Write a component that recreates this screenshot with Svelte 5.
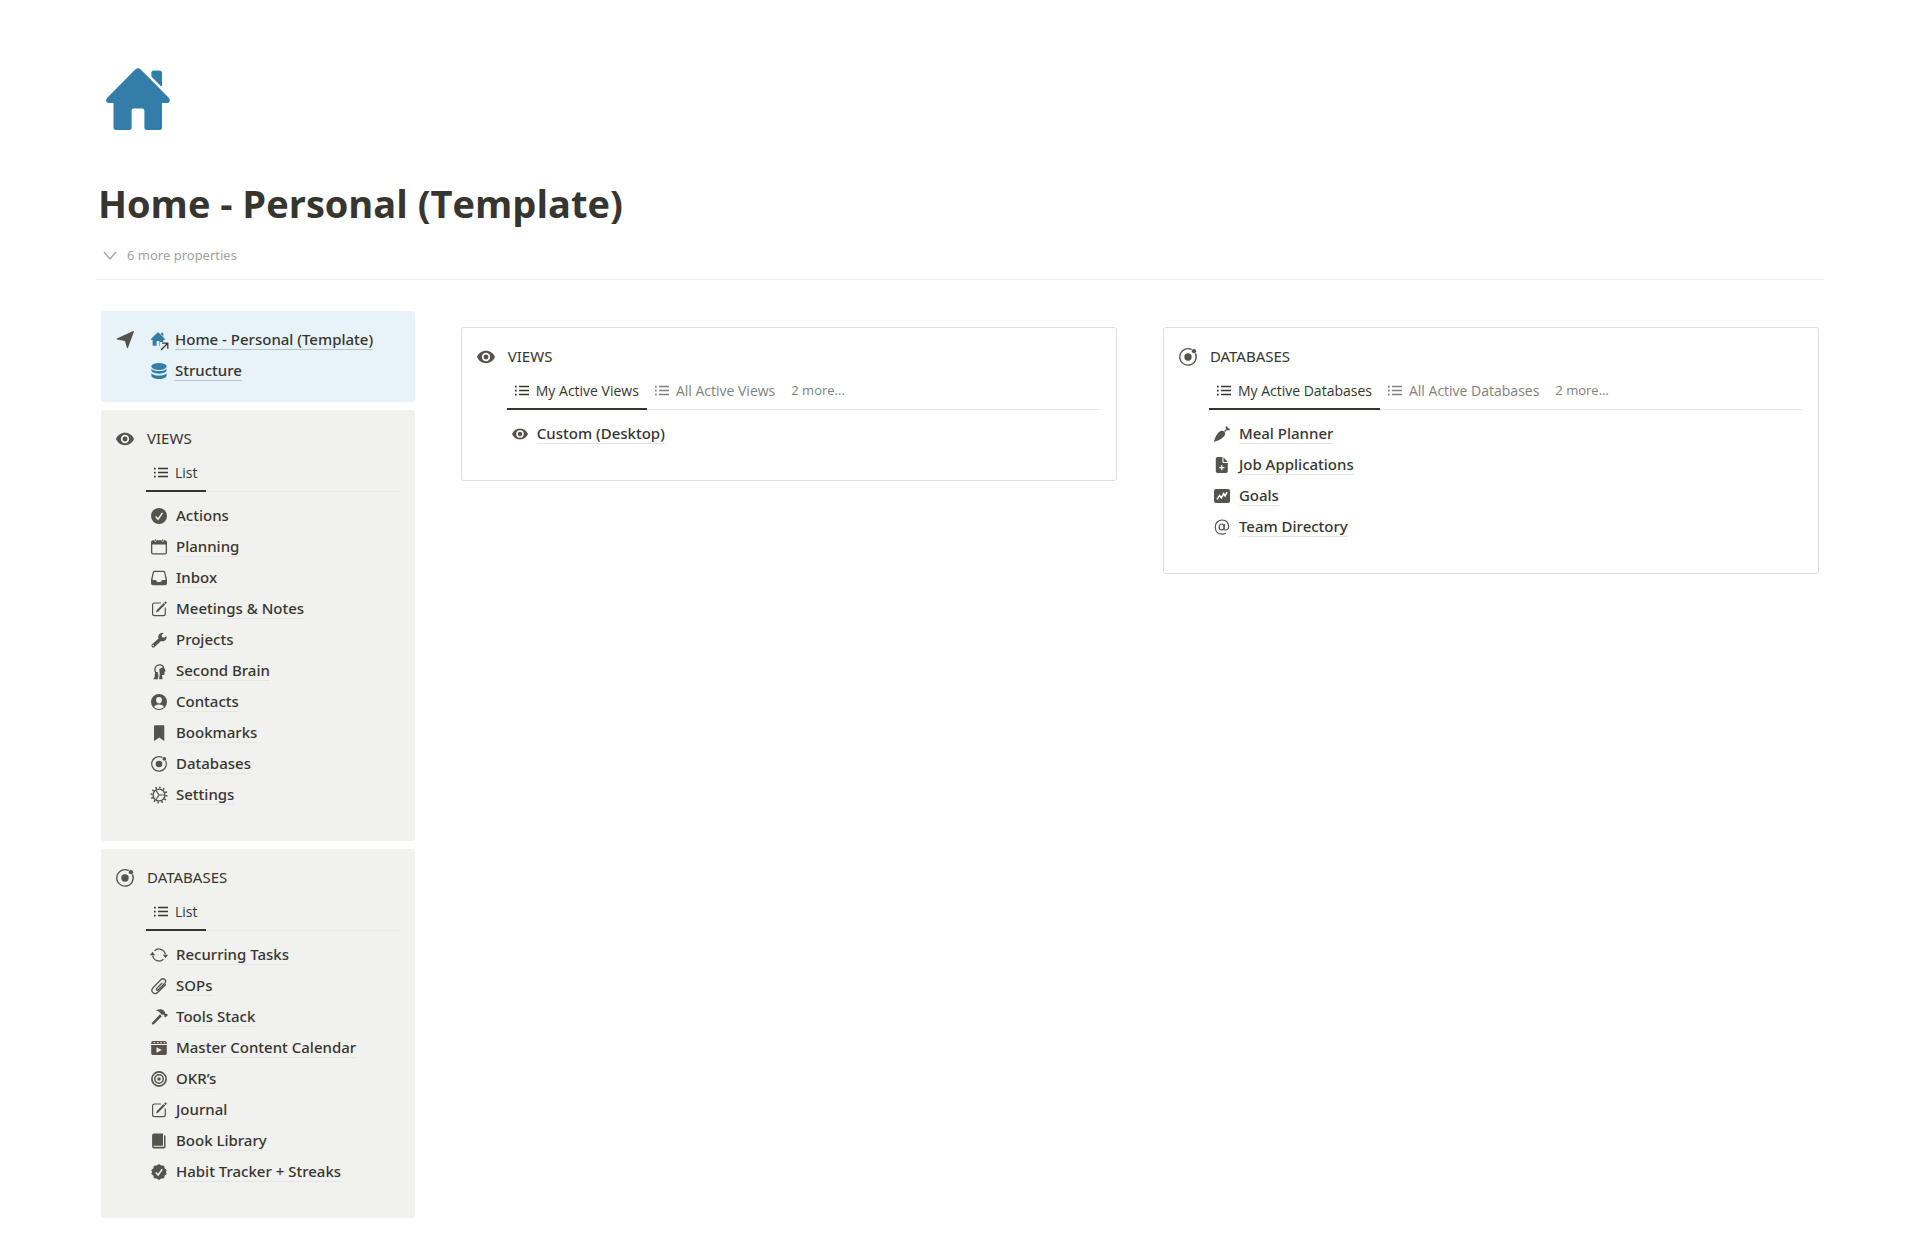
<script>
  const list = '<path d="M4 3.5h10M4 7.5h10M4 11.5h10" stroke="currentColor" stroke-width="1.3" fill="none"/><path d="M0 2.7h1.7v1.7H0zM0 6.7h1.7v1.7H0zM0 10.7h1.7v1.7H0z"/>'
  const chevron = '<path d="M1 1l6 7 6-7" fill="none" stroke="currentColor" stroke-width="1.3"/>'
  const house = '<path d="M29.5 1.2Q32-.8 34.500 1.2L63 30Q65.500 34.500 61.300 35H56V59.500Q56 62 53.400 62H41Q38.400 62 38.400 59.500V42.500Q38.400 40.500 36.300 40.500H27.700Q25.600 40.500 25.600 42.500V59.500Q25.600 62 23 62H10.100Q7.500 62 7.500 59.500V35H2.700Q-1.500 34.500 1 30Z"/><path d="M48 2.500H53.400Q56 2.500 56 5V17.500Q56 19 54.500 17.700L46.300 9.600Q45.300 8.500 45.300 7V5Q45.300 2.500 48 2.500Z"/>'

  // all drawn on a 16 x 16 grid
  const icons = {
    arrow: '<path d="M15.9.7 10.6 15q-.3.8-.8 0L7.9 8.9 1 7.6Q0 7.200 .8 6.700L15.200.1q.9-.2.7.6z"/>',
    eye: '<path fill-rule="evenodd" d="M8 2.500C4.400 2.500 1.400 4.600 0 8c1.400 3.400 4.400 5.500 8 5.500s6.600-2.100 8-5.500c-1.400-3.400-4.400-5.500-8-5.500zm0 9.200a3.700 3.700 0 1 1 0-7.400 3.700 3.700 0 0 1 0 7.400z"/><circle cx="8" cy="8" r="2.200"/>',
    orbit: '<path d="M11.300 1.400A7.300 7.300 0 1 0 14.600 4.800" fill="none" stroke="currentColor" stroke-width="1.200"/><circle cx="8" cy="8" r="3.300"/><circle cx="13.300" cy="2.800" r="1.900"/>',
    database: '<ellipse cx="8" cy="3.500" rx="7.600" ry="3.400"/><path d="M.4 5.800c1.400 1.600 4.200 2.300 7.600 2.300s6.200-.7 7.600-2.300v1.500c0 1.900-3.400 3.400-7.600 3.400S.4 9.200.4 7.300zM.4 10.200c1.400 1.700 4.200 2.400 7.600 2.400s6.200-.7 7.600-2.400v2.200c0 2-3.400 3.500-7.600 3.500S.4 14.400.4 12.400z"/>',
    check: '<circle cx="8" cy="8" r="8"/><path d="m4.600 8.500 2.500 2.700 4.300-6.400" class="cut"/>',
    calendar: '<path fill-rule="evenodd" d="M2 1.300h1.200q.2 1.500 1.100 1.500t1.100-1.500h5.200q.2 1.500 1.100 1.500t1.100-1.500H14q2 0 2 2V13.500q0 2-2 2H2q-2 0-2-2V3.300q0-2 2-2zM1.300 5.600v7.700q0 .9.900.9h11.600q.9 0 .9-.9V5.600z"/><path d="M3.800.2h1v1.900h-1zM11.200.2h1v1.900h-1z"/>',
    inbox: '<path fill-rule="evenodd" d="M3.500.8h9q1.500 0 1.800 1.400L16 9.700v3.500q0 2-2 2H2q-2 0-2-2V9.700L1.700 2.200Q2 .8 3.500.8zM3.800 2q-.8 0-1 .8L1.400 9.900h3.200q.5 0 .7.700.3 1.500 1.500 1.500h2.400q1.200 0 1.500-1.500.2-.7.700-.7h3.200l-1.400-7.100q-.2-.8-1-.8z"/>',
    edit: '<path d="M10 2H3.500Q1.600 2 1.600 3.900v8.900q0 1.900 1.900 1.900h8.900q1.900 0 1.900-1.900V6.500" fill="none" stroke="currentColor" stroke-width="1.200"/><path d="M5 11.400l.8-2.500 6.900-6.900 1.500 1.500-6.900 6.900zM13.200 1.500l.8-.9q.5-.4.900 0l.7.700q.4.400 0 .9l-.9.800z"/>',
    wrench: '<path fill-rule="evenodd" d="M15.500 4.200c.6 2.600-1.200 5-3.700 5-.6 0-1.100-.1-1.700-.3L3.600 15q-1.400 1-2.600 0-1.100-1.200-.2-2.600L7.600 6.600C6.500 4 8.200 1 11.500.8L12.700 1 10.600 3.200l.5 1.900 1.900.6zM2.200 12.700a.8.8 0 1 0 0 1.600.8.8 0 0 0 0-1.600z"/>',
    brain: '<path d="M4.700 9.200A4.700 4.700 0 1 1 12.700 4.300" fill="none" stroke="currentColor" stroke-width="1.300"/><path d="M8.300 5.900 12.500 3.800l1 1.500 1.200 3-1.200.5v2.100q0 1-1.100 1H11l.6 4.300H8.100l.6-5.100zM4 9h2.800l.6 4.300-.6 3H2l1.600-2.100z"/>',
    person: '<path fill-rule="evenodd" d="M8 0a8 8 0 1 1 0 16A8 8 0 0 1 8 0zm0 3a3 3 0 0 0-2.900 3.200C5.100 8 6.400 9.400 8 9.400s2.900-1.400 2.900-3.200A3 3 0 0 0 8 3zM3 12.900a7 7 0 0 0 10 0c-1-1.600-3-2.300-5-2.300s-4 .7-5 2.300z"/>',
    bookmark: '<path d="M3 1.200Q3 .2 4 .2h8.300q1 0 1 1v14.300q0 .6-.6.200L8.200 12.400 3.600 15.700q-.6.400-.6-.2z"/>',
    gear: '<circle cx="8" cy="8" r="5.900" fill="none" stroke="currentColor" stroke-width="1.400"/><circle cx="8" cy="8" r="7.500" fill="none" stroke="currentColor" stroke-width="2" stroke-dasharray="1.500 2.427"/><path d="M8 8h5.600M8 8 5 3.200M8 8l-3 4.800" stroke="currentColor" stroke-width="1.200"/>',
    refresh: '<path d="M3.500 3.900A6.300 6.300 0 0 1 14.300 7.500M12.500 12.100A6.300 6.300 0 0 1 1.700 8.500" fill="none" stroke="currentColor" stroke-width="1.300"/><path d="M11.800 7.800h5.400l-2.700 3.400zM-1.200 8.200h5.400L1.500 4.800z"/>',
    clip: '<path d="m10.900 5.200-5.100 5.200c-1 1.200.4 2.500 1.500 1.400l6.300-6.300c2.700-2.900-1-6.300-3.700-3.700L2.200 9.500c-3.600 3.900 1.200 8.200 4.700 4.800l7.600-7.600" fill="none" stroke="currentColor" stroke-width="1.300" stroke-linecap="round"/>',
    hammer: '<path d="m9 5.300 1.900 1.900-8 8q-.8.700-1.700 0-.8-.9 0-1.800zM4.900 1.400C8-.2 10.800-.1 12.700 1.600L14 3v1.300l1 .8.900-.3 1 1.100-2.500 2.600-1.200-1.100.2-1-1.100-.8-1.500.1-2.600-2.600Q7 1.600 4.900 1.400z"/>',
    video: '<path fill-rule="evenodd" d="M2 1h12q1.800 0 1.800 1.800V4H.2V2.800Q.2 1 2 1zM.2 5h15.600v8.200q0 1.900-1.900 1.900H2.100q-1.900 0-1.900-1.900zm5.300 2.200v5.600l5.300-2.800z"/><path class="cut thin" d="M2.500 2.700h1.700M6 2.700h1.700M9.300 2.700H11M12.800 2.700h1.500"/>',
    target: '<g fill="none" stroke="currentColor"><circle cx="8" cy="8" r="7.100" stroke-width="1.700"/><circle cx="8" cy="8" r="4.200" stroke-width="1.500"/></g><circle cx="8" cy="8" r="1.800"/>',
    book: '<path d="M3 .6h9v12.200H3.200q-.8 0-.8.500t.8.500H13V2q1.500 0 1.500 1.500v10.200q0 1.800-1.800 1.800H3.100q-2 0-2-2.200V2.500Q1.100.6 3 .6z"/>',
    badge: '<path d="m8 0 2.300 1.500 2.800.2.600 2.700L15.800 6 14.900 8l.9 2-2.100 1.600-.6 2.700-2.800.2L8 16l-2.300-1.500-2.800-.2-.6-2.700L.2 10l.9-2-.9-2 2.100-1.600.6-2.700 2.800-.2z"/><path d="m4.800 8.500 2.400 2.500 4-5.700" class="cut"/>',
    carrot: '<path d="M0 15.900C1 11.200 3.500 6.200 7 4.800q1.900-.5 3.400.8 1.500 1.600.5 3.500C9.100 12.300 4.600 14.800 0 15.900zM10.200 4.700 12 3.300 11.600.8q1.500-1.300 2.100.6l.1.800 1 .1q1.800.5.5 2.100l-2.600-.3-1.300 1.800z"/>',
    file: '<path fill-rule="evenodd" d="M3.500 0h4.900v5q0 1 1 1h4.400v8.300q0 1.700-1.700 1.700H3.500q-1.700 0-1.700-1.700V1.700Q1.800 0 3.500 0zm3.700 8v2h-2v1.200h2v2h1.200v-2h2V10h-2V8z"/><path d="m9.500.2 4.100 4.700H10q-.5 0-.5-.5z"/>',
    chart: '<rect y="1" width="16" height="14" rx="2"/><path d="m3 11.300 2.600-3.800 1.700 2.400 2.400-4.300 1.400 2.300 2-3.700" class="cut"/>',
    at: '<g fill="none" stroke="currentColor" stroke-width="1.200"><ellipse cx="7.700" cy="7.900" rx="2.500" ry="2.900"/><path d="M10.400 5 10 9.400q0 1.600 1.600 1.600c1.800 0 3-1.500 3-3.800C14.600 3.500 12 1 8.300 1 4.200 1 1.300 4 1.300 8.200s2.700 6.900 6.700 6.900q2.200 0 3.800-.9"/></g>',
  }

  const sections = [
    {
      title: 'VIEWS',
      icon: 'eye',
      items: [
        ['check', 'Actions'],
        ['calendar', 'Planning'],
        ['inbox', 'Inbox'],
        ['edit', 'Meetings & Notes'],
        ['wrench', 'Projects'],
        ['brain', 'Second Brain'],
        ['person', 'Contacts'],
        ['bookmark', 'Bookmarks'],
        ['orbit', 'Databases'],
        ['gear', 'Settings'],
      ],
    },
    {
      title: 'DATABASES',
      icon: 'orbit',
      items: [
        ['refresh', 'Recurring Tasks'],
        ['clip', 'SOPs'],
        ['hammer', 'Tools Stack'],
        ['video', 'Master Content Calendar'],
        ['target', 'OKR’s'],
        ['edit', 'Journal'],
        ['book', 'Book Library'],
        ['badge', 'Habit Tracker + Streaks'],
      ],
    },
  ]

  const boards = [
    {
      title: 'VIEWS',
      icon: 'eye',
      tabs: ['My Active Views', 'All Active Views'],
      items: [['eye', 'Custom (Desktop)']],
    },
    {
      title: 'DATABASES',
      icon: 'orbit',
      tabs: ['My Active Databases', 'All Active Databases'],
      items: [
        ['carrot', 'Meal Planner'],
        ['file', 'Job Applications'],
        ['chart', 'Goals'],
        ['at', 'Team Directory'],
      ],
    },
  ]
</script>

{#snippet icon(name)}
  <svg class="icon" viewBox="0 0 16 16" aria-hidden="true">{@html icons[name]}</svg>
{/snippet}

{#snippet callout(block, kind)}
  <section class="callout {kind}">
    <span class="mark">{@render icon(block.icon)}</span>
    <div class="content">
      <h2>{block.title}</h2>
      <div class="tabs">
        {#each block.tabs ?? ['List'] as tab, i}
          <button class="tab" class:active={i === 0}>
            <svg class="list-icon" viewBox="0 0 14 14" aria-hidden="true">{@html list}</svg>
            {tab}
          </button>
        {/each}
        {#if block.tabs}
          <button class="tab rest">2 more...</button>
        {/if}
      </div>
      <ul class="items">
        {#each block.items as [name, label]}
          <li><a href="#top">{@render icon(name)}<span class="label">{label}</span></a></li>
        {/each}
      </ul>
    </div>
  </section>
{/snippet}

<main id="top">
  <header>
    <svg class="page-icon" viewBox="0 0 64 62" aria-hidden="true">{@html house}</svg>
    <h1>Home - Personal (Template)</h1>
    <button class="more">
      <svg viewBox="0 0 14 9" aria-hidden="true">{@html chevron}</svg>
      6 more properties
    </button>
  </header>

  <div class="columns">
    <div class="sidebar">
      <nav class="callout blue">
        <span class="mark">{@render icon('arrow')}</span>
        <ul class="content">
          <li>
            <a href="#top">
              <span class="shortcut">
                <svg class="mini-house" viewBox="0 0 64 62" aria-hidden="true">{@html house}</svg>
                <svg class="jump" viewBox="0 0 9 9" aria-hidden="true">
                  <path d="M1 8 7.500 1.500M2.200 1.200h5.600v5.600" />
                </svg>
              </span>
              <span class="label">Home - Personal (Template)</span>
            </a>
          </li>
          <li><a href="#top">{@render icon('database')}<span class="label">Structure</span></a></li>
        </ul>
      </nav>
      {#each sections as section}
        {@render callout(section, 'grey')}
      {/each}
    </div>
    {#each boards as board}
      {@render callout(board, 'outline')}
    {/each}
  </div>
</main>

<style>
  :global(body) {
    margin: 0;
    background: #fff;
  }

  main {
    padding: 68px 95px 40px 96px;
    font-family: "Noto Sans", "Open Sans", sans-serif;
    font-size: 15px;
    color: #37352f;
  }

  header {
    display: flex;
    flex-direction: column;
    align-items: flex-start;
    padding-bottom: 10px;
    border-bottom: 1px solid #ededec;
  }

  .page-icon {
    width: 64px;
    height: 62px;
    margin-left: 10px;
    fill: #337ea9;
  }

  h1 {
    margin: 49px 0 0 2px;
    font-family: "Open Sans", "Noto Sans", sans-serif;
    font-size: 38px;
    line-height: 48px;
    font-weight: 700;
  }

  h2 {
    margin: 0;
    padding-left: 1px;
    font-size: 15px;
    line-height: 31px;
    font-weight: 400;
  }

  button {
    border: 0;
    background: none;
    font-family: inherit;
    color: inherit;
    cursor: pointer;
  }

  .more {
    display: flex;
    align-items: center;
    gap: 10px;
    height: 28px;
    margin-top: 14px;
    padding: 0 7px;
    font-size: 13px;
    color: #a3a29f;
  }

  .more svg {
    width: 14px;
    height: 9px;
  }

  .columns {
    display: grid;
    grid-template-columns: 22fr 46fr 46fr;
    gap: 46px;
    align-items: start;
    padding: 31px 5px 0;
  }

  .sidebar {
    display: flex;
    flex-direction: column;
    gap: 8px;
  }

  .callout {
    --surface: #fff;
    display: flex;
    gap: 9px;
    padding: 13px 16px 31px 12px;
    border-radius: 3px;
    background: var(--surface);
  }

  .grey {
    --surface: #f1f1ef;
  }

  .blue {
    --surface: #e7f3f8;
    padding-bottom: 16px;
  }

  .outline {
    margin-top: 16px;
    border: 1px solid #dfdfde;
  }

  .mark {
    display: flex;
    align-items: center;
    justify-content: center;
    width: 24px;
    height: 31px;
  }

  .mark .icon {
    width: 18px;
    height: 18px;
  }

  .content {
    flex: 1;
    min-width: 0;
  }

  .icon {
    flex: none;
    width: 16px;
    height: 16px;
    overflow: visible;
    color: #55534e;
    fill: currentColor;
  }

  .icon :global(.cut) {
    fill: none;
    stroke: var(--surface);
    stroke-width: 1.5;
  }

  .icon :global(.thin) {
    stroke-width: 1;
  }

  .tabs {
    display: flex;
    box-shadow: inset 0 -1px #e8e8e6;
  }

  .tab {
    display: flex;
    align-items: center;
    gap: 7px;
    height: 38px;
    padding: 0 8px 2px;
    font-family: "Open Sans", "Noto Sans", sans-serif;
    font-size: 14px;
    color: #82817d;
    white-space: nowrap;
  }

  .tab.active {
    color: #37352f;
    font-weight: 500;
    box-shadow: inset 0 -2px #37352f;
  }

  .tab.rest {
    font-size: 13px;
  }

  .list-icon {
    width: 14px;
    height: 14px;
    fill: currentColor;
  }

  ul {
    margin: 0;
    padding: 0;
    list-style: none;
  }

  .items {
    margin-top: 8px;
  }

  li a {
    display: flex;
    align-items: center;
    gap: 9px;
    height: 31px;
    padding-left: 5px;
    color: inherit;
    font-weight: 500;
    text-decoration: none;
    white-space: nowrap;
  }

  .label {
    line-height: 20px;
    border-bottom: 1px solid #e5e5e3;
  }

  .blue li a {
    gap: 8px;
  }

  .blue .label {
    border-color: #b9c4c8;
  }

  .blue li .icon {
    color: #337ea9;
  }

  .shortcut {
    position: relative;
    width: 16px;
    height: 16px;
  }

  .mini-house {
    display: block;
    width: 14px;
    height: 14px;
    fill: #337ea9;
  }

  .jump {
    position: absolute;
    right: -2px;
    bottom: -3px;
    width: 9px;
    height: 9px;
    background: #e7f3f8;
    fill: none;
    stroke: #37352f;
    stroke-width: 1.3;
  }
</style>
